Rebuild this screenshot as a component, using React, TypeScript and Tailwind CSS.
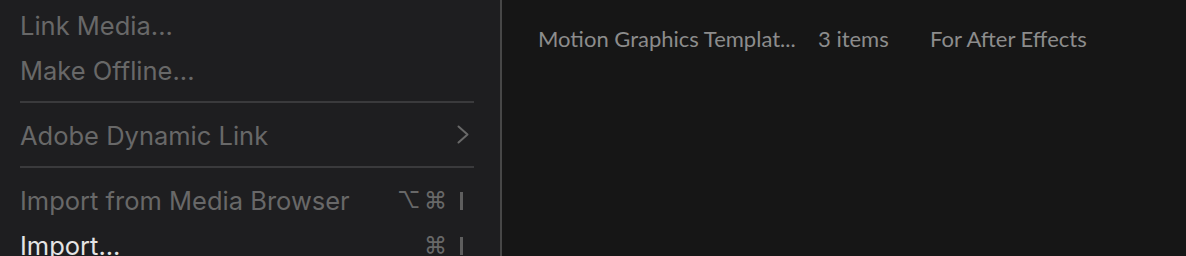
const menuFont = { fontFamily: "Inter, 'Noto Sans', sans-serif" };

function Chevron() {
  return (
    <svg width="13" height="19" viewBox="0 0 13 19" fill="none">
      <polyline
        points="1.5,1.5 10.5,9.5 1.5,17.5"
        stroke="currentColor"
        strokeWidth="2"
        strokeLinecap="round"
        strokeLinejoin="round"
      />
    </svg>
  );
}

function Item({
  label,
  shortcut,
  submenu,
  active,
}: {
  label: string;
  shortcut?: "opt" | "cmd";
  submenu?: boolean;
  active?: boolean;
}) {
  return (
    <div
      className={`flex h-[45px] shrink-0 items-center justify-between pl-5 pr-[30px] text-[25.5px] leading-none ${
        active ? "text-[#e4e4e4]" : "text-[#686868]"
      }`}
    >
      <span className="pt-[3px]">{label}</span>
      {shortcut && (
        <span className="flex items-center pt-[2px] text-[23px] text-[#686868]">
          {shortcut === "opt" && <span className="w-[18px] text-center">⌥</span>}
          <span className="ml-[9px] w-[20px] text-center">⌘</span>
          <span className="ml-[16px] mr-[7px] h-[18px] w-[3px] bg-[#5e5e5e]" />
        </span>
      )}
      {submenu && <Chevron />}
    </div>
  );
}

function Separator() {
  return (
    <div className="flex h-[20px] shrink-0 items-center px-5">
      <div className="h-[2px] w-[454px] bg-[#3a3a3c]" />
    </div>
  );
}

export default function App() {
  return (
    <div className="flex h-[256px] w-[1186px] overflow-hidden bg-[#161616]">
      <div
        className="flex w-[500px] shrink-0 flex-col bg-[#1e1e20] pt-[2px]"
        style={menuFont}
      >
        <Item label="Link Media..." />
        <Item label="Make Offline..." />
        <Separator />
        <Item label="Adobe Dynamic Link" submenu />
        <Separator />
        <Item label="Import from Media Browser" shortcut="opt" />
        <Item label="Import..." shortcut="cmd" active />
      </div>
      <div className="w-[2px] shrink-0 bg-[#474747]" />
      <div
        className="flex flex-1 items-start pt-[25px] pl-[36px] text-[22px] leading-[28px] text-[#8c8c8c]"
        style={{ fontFamily: "Lato, 'Noto Sans', sans-serif" }}
      >
        <span className="w-[280px] whitespace-nowrap">Motion Graphics Templat...</span>
        <span className="w-[112px] whitespace-nowrap">3 items</span>
        <span className="whitespace-nowrap">For After Effects</span>
      </div>
    </div>
  );
}
